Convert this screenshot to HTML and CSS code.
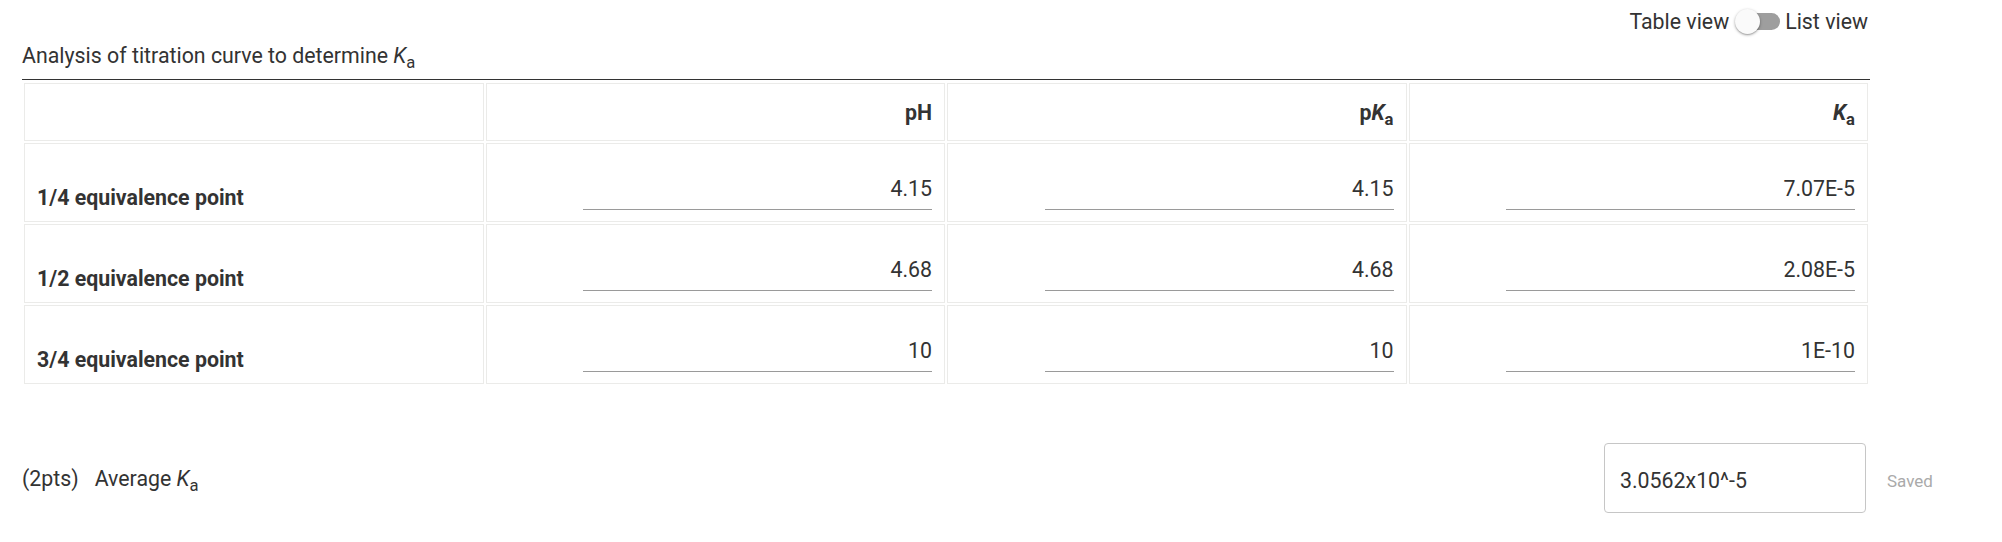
FILE: index.html
```html
<!DOCTYPE html>
<html>
<head>
<meta charset="utf-8">
<link rel="stylesheet" href="styles.css">
</head>
<body>
<div class="page">
  <div class="toggle-row">
    <span class="toggle-label">Table view</span>
    <span class="switch"><span class="track"></span><span class="knob"></span></span>
    <span class="toggle-label">List view</span>
  </div>
  <div class="title">Analysis of titration curve to determine <i>K</i><sub>a</sub></div>
  <table class="grid">
    <thead>
      <tr>
        <th></th>
        <th>pH</th>
        <th>p<i>K</i><sub>a</sub></th>
        <th><i>K</i><sub>a</sub></th>
      </tr>
    </thead>
    <tbody>
      <tr>
        <td class="label">1/4 equivalence point</td>
        <td class="val"><input class="line-input" value="4.15"></td>
        <td class="val"><input class="line-input" value="4.15"></td>
        <td class="val"><input class="line-input" value="7.07E-5"></td>
      </tr>
      <tr>
        <td class="label">1/2 equivalence point</td>
        <td class="val"><input class="line-input" value="4.68"></td>
        <td class="val"><input class="line-input" value="4.68"></td>
        <td class="val"><input class="line-input" value="2.08E-5"></td>
      </tr>
      <tr>
        <td class="label">3/4 equivalence point</td>
        <td class="val"><input class="line-input" value="10"></td>
        <td class="val"><input class="line-input" value="10"></td>
        <td class="val"><input class="line-input" value="1E-10"></td>
      </tr>
    </tbody>
  </table>
  <div class="avg-row">
    <div class="avg-label"><span class="pts">(2pts)</span>Average <i>K</i><sub>a</sub></div>
    <input class="box-input" value="3.0562x10^-5">
    <span class="saved">Saved</span>
  </div>
</div>
</body>
</html>
```

FILE: styles.css
```css
* { box-sizing: border-box; }
html, body {
  margin: 0;
  padding: 0;
  background: #fff;
  font-family: Roboto, "Liberation Sans", sans-serif;
  color: #333;
}
.page {
  padding: 0 132px 0 22px;
  width: 2002px;
}
.toggle-row {
  height: 42px;
  margin-bottom: 1px;
  display: flex;
  justify-content: flex-end;
  align-items: center;
  padding-right: 2px;
  font-size: 21.33px;
}
.toggle-label { line-height: 25px; }
.switch {
  position: relative;
  width: 46px;
  height: 26px;
  margin: 0 4px 0 6px;
}
.switch .track {
  position: absolute;
  left: 8px;
  top: 5px;
  width: 37px;
  height: 17px;
  border-radius: 9px;
  background: #9e9e9e;
}
.switch .knob {
  position: absolute;
  left: 0;
  top: 1px;
  width: 25px;
  height: 25px;
  border-radius: 50%;
  background: #fafafa;
  box-shadow: 0 1px 3px rgba(0,0,0,0.35), 0 1px 1px rgba(0,0,0,0.12);
}
.title {
  font-size: 21.33px;
  line-height: 25px;
  padding-bottom: 11px;
  border-bottom: 1px solid #333;
}
sub {
  font-size: 0.78em;
  vertical-align: -0.3em;
  line-height: 0;
}
.grid {
  margin-top: 1px;
  width: 1848px;
  table-layout: fixed;
  border-collapse: separate;
  border-spacing: 2px;
}
.grid th, .grid td {
  border: 1px solid #ebebe9;
  padding: 0 12px;
}
.grid th {
  font-size: 21.33px;
  font-weight: 700;
  line-height: 25px;
  text-align: right;
  padding-top: 16px;
  padding-bottom: 15px;
}
.grid td {
  font-size: 21.33px;
  line-height: 25px;
  padding-top: 30px;
  padding-bottom: 11px;
  vertical-align: bottom;
}
.grid td.label {
  font-weight: 700;
  padding-bottom: 11px;
  padding-top: 0;
}
.grid td.val { text-align: right; }
.line-input {
  display: inline-block;
  width: 349px;
  font-family: Roboto, "Liberation Sans", sans-serif;
  font-size: 21.33px;
  line-height: 25px;
  color: #333;
  text-align: right;
  border: none;
  border-bottom: 1px solid #9a9a9a;
  padding: 2px 0 8px;
  margin: 0;
  background: transparent;
  outline: none;
  vertical-align: bottom;
}
.avg-row {
  margin-top: 57px;
  margin-right: -62px;
  display: flex;
  align-items: center;
}
.avg-label {
  flex: 1;
  font-size: 21.33px;
  line-height: 25px;
}
.pts { margin-right: 16px; }
.box-input {
  width: 262px;
  height: 70px;
  border: 1px solid #c6c6c6;
  border-radius: 4px;
  padding: 4px 15px 0;
  font-family: Roboto, "Liberation Sans", sans-serif;
  font-size: 21.33px;
  color: #333;
  outline: none;
  margin: 0;
}
.saved {
  margin-left: 21px;
  font-size: 17px;
  color: #aaa;
  width: 45px;
  padding-top: 6px;
}
```
